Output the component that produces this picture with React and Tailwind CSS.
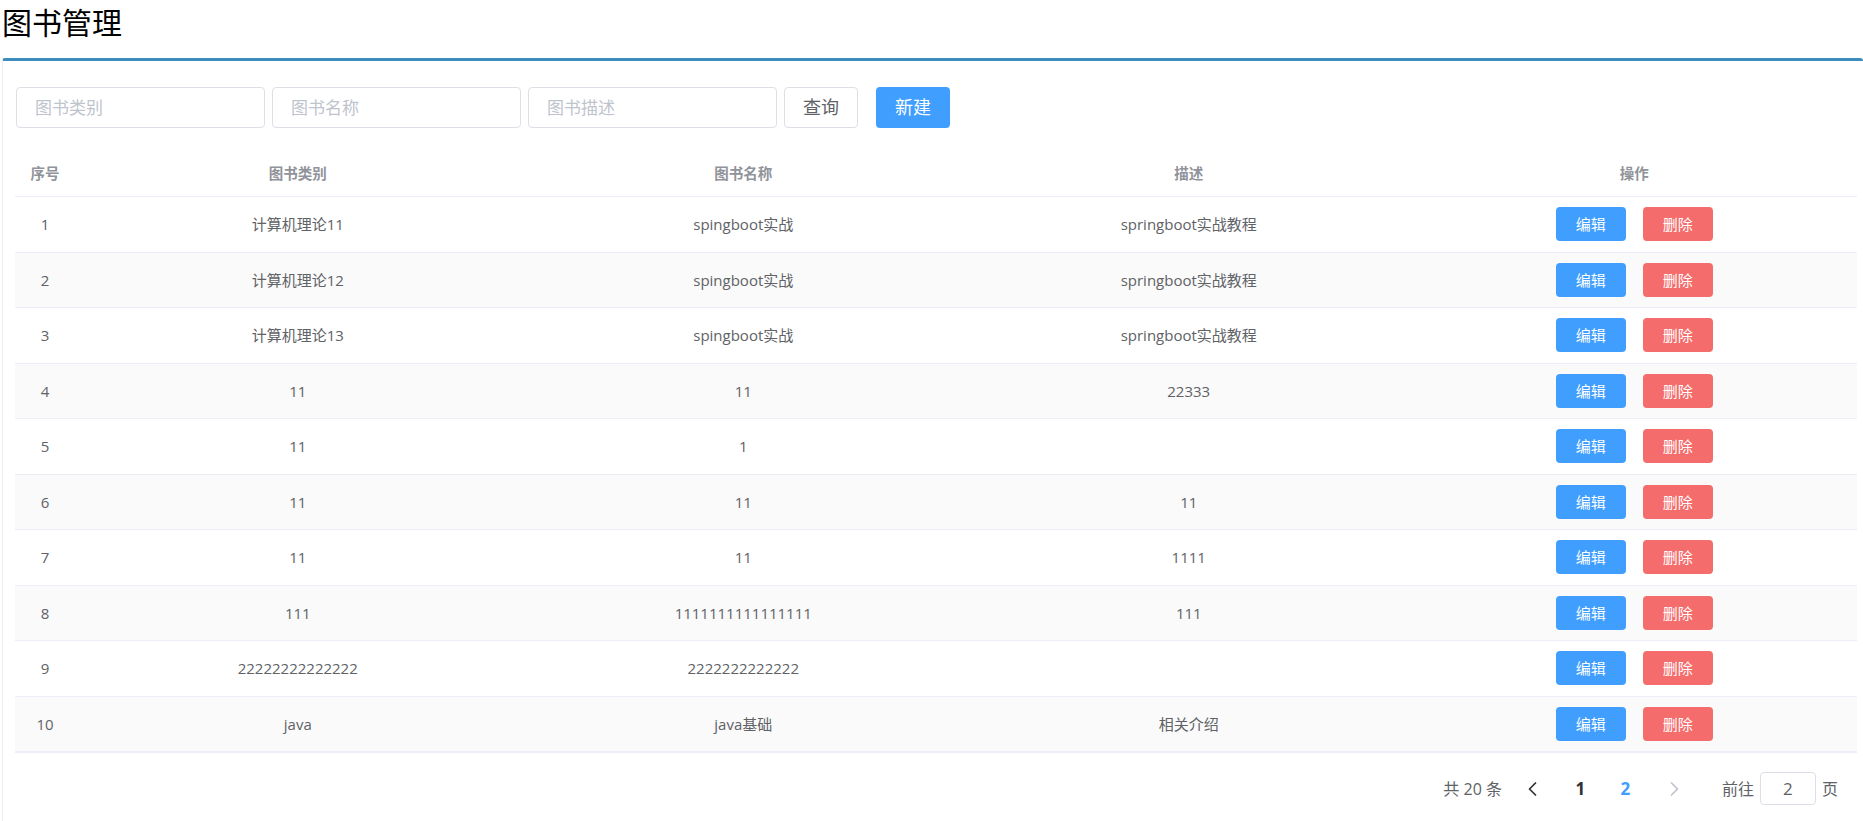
import React from "react";

const rows = [
  ["1", "计算机理论11", "spingboot实战", "springboot实战教程"],
  ["2", "计算机理论12", "spingboot实战", "springboot实战教程"],
  ["3", "计算机理论13", "spingboot实战", "springboot实战教程"],
  ["4", "11", "11", "22333"],
  ["5", "11", "1", ""],
  ["6", "11", "11", "11"],
  ["7", "11", "11", "1111"],
  ["8", "111", "1111111111111111", "111"],
  ["9", "22222222222222", "2222222222222", ""],
  ["10", "java", "java基础", "相关介绍"],
];

const cols = "grid grid-cols-[60px_1fr_1fr_1fr_1fr] items-center";

const SearchInput = ({ placeholder }) => (
  <input
    type="text"
    placeholder={placeholder}
    className="w-[249px] h-[41px] border border-[#dcdfe6] rounded-[4px] pl-[18px] text-[17px] text-[#606266] outline-none placeholder:text-[#c0c4cc]"
  />
);

const Arrow = ({ left, color }) => (
  <svg width="9" height="14" viewBox="0 0 9 14" fill="none">
    <polyline
      points={left ? "7.5,1 1.5,7 7.5,13" : "1.5,1 7.5,7 1.5,13"}
      stroke={color}
      strokeWidth="1.7"
      strokeLinecap="round"
      strokeLinejoin="round"
    />
  </svg>
);

const App = () => {
  return (
    <div className="w-full min-h-screen bg-white font-['Open_Sans','Noto_Sans_CJK_SC',sans-serif]">
      {/* page title */}
      <div className="h-[58px] pl-[2px]">
        <h1 className="text-[30px] leading-[42px] font-normal text-black font-['Noto_Sans_CJK_SC',sans-serif]">
          图书管理
        </h1>
      </div>

      <div className="ml-[2px] bg-white border-t-[3px] border-t-[#3c8dbc] border-l border-l-[#eeeeee] rounded-[3px] pl-[12px] pr-[6px] pt-[26px] pb-[20px]">
        {/* search bar */}
        <div className="flex items-center gap-[7px] ml-[1px] mb-[14px]">
          <SearchInput placeholder="图书类别" />
          <SearchInput placeholder="图书名称" />
          <SearchInput placeholder="图书描述" />
          <button className="w-[74px] h-[41px] border border-[#dcdfe6] rounded-[4px] bg-white text-[18px] text-[#606266]">
            查询
          </button>
          <button className="ml-[11px] w-[74px] h-[41px] rounded-[4px] bg-[#409eff] text-[18px] text-white">
            新建
          </button>
        </div>

        {/* table */}
        <div className="border-b border-[#ebeef5]">
          <div className={`${cols} h-[55px] pt-[10px] border-b border-[#ebeef5] text-[14.5px] font-bold text-[#909399] text-center`}>
            <div>序号</div>
            <div>图书类别</div>
            <div>图书名称</div>
            <div>描述</div>
            <div>操作</div>
          </div>
          {rows.map((r, i) => (
            <div
              key={r[0]}
              className={`${cols} h-[55.5px] border-b border-[#ebeef5] text-[15px] text-[#606266] text-center ${
                i % 2 === 1 ? "bg-[#fafafa]" : "bg-white"
              }`}
            >
              <div>{r[0]}</div>
              <div>{r[1]}</div>
              <div>{r[2]}</div>
              <div>{r[3]}</div>
              <div className="flex justify-center gap-[17px]">
                <button className="w-[70px] h-[34px] rounded-[4px] bg-[#409eff] text-white text-[15px]">
                  编辑
                </button>
                <button className="w-[70px] h-[34px] rounded-[4px] bg-[#f56c6c] text-white text-[15px]">
                  删除
                </button>
              </div>
            </div>
          ))}
        </div>

        {/* pagination */}
        <div className="flex justify-end items-center h-[33px] mt-[19px] pr-[19px] text-[16px] text-[#606266]">
          <span className="mr-[11px] whitespace-pre">共 20 条</span>
          <div className="w-[40px] h-[33px] flex items-center justify-center mr-[5px]">
            <Arrow left color="#303133" />
          </div>
          <div className="w-[45px] text-center text-[17px] font-bold text-[#303133]">1</div>
          <div className="w-[45px] text-center text-[17px] font-bold text-[#409eff]">2</div>
          <div className="w-[40px] h-[33px] flex items-center justify-center ml-[7px]">
            <Arrow color="#c0c4cc" />
          </div>
          <span className="ml-[27px]">前往</span>
          <div className="ml-[6px] w-[56px] h-[33px] border border-[#dcdfe6] rounded-[4px] flex items-center justify-center text-[17px]">
            2
          </div>
          <span className="ml-[6px]">页</span>
        </div>
      </div>
    </div>
  );
};

export default App;
